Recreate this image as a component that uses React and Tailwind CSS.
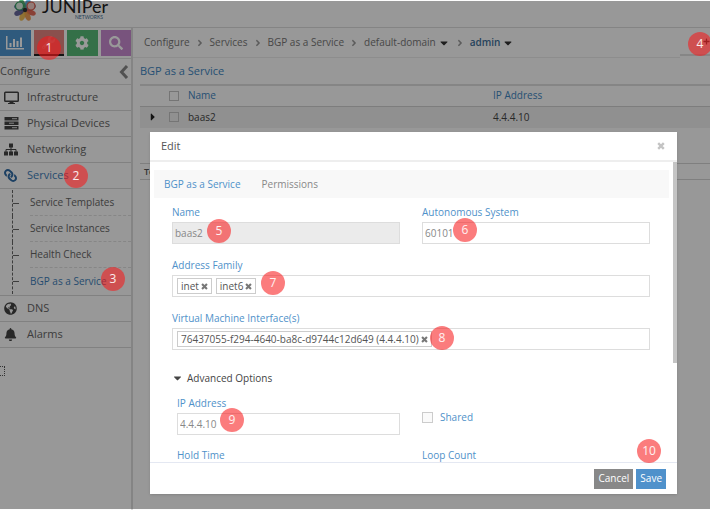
import React, { useState } from "react";
import {
  FaWrench,
  FaCog,
  FaSearch,
  FaLink,
  FaGlobeAmericas,
  FaBell,
  FaCaretDown,
  FaCaretRight,
  FaAngleRight,
  FaPlus,
} from "react-icons/fa";

// Bar chart with axes for the Monitor button
const ChartIcon = () => (
  <svg width="18" height="14" viewBox="0 0 18 14" fill="currentColor" aria-hidden="true">
    <path d="M0 0h1.5v12H18v1.5H0z" />
    <path d="M3.5 7h2v4h-2zM7 3h2v8H7zM10.5 5h2v6h-2zM14 1.500h2V11h-2z" />
  </svg>
);

const MonitorIcon = () => (
  <svg width="15" height="14" viewBox="0 0 15 14" aria-hidden="true">
    <rect x="0.75" y="1.25" width="13.500" height="9" rx="0.800" fill="none" stroke="currentColor" strokeWidth="1.500" />
    <path d="M5.500 10.500h4v1.500H11v1H4v-1h1.500z" fill="currentColor" />
  </svg>
);

const ServerIcon = () => (
  <svg width="15" height="13" viewBox="0 0 15 13" aria-hidden="true">
    {[0, 4.5, 9].map((y) => (
      <g key={y}>
        <rect x="0.5" y={y} width="14" height="3.500" fill="currentColor" />
        <rect x={y === 4.5 ? 5 : 8} y={y + 1.2} width="5" height="1" fill="#ddd" />
      </g>
    ))}
  </svg>
);

const SitemapIcon = () => (
  <svg width="14" height="13" viewBox="0 0 14 13" fill="currentColor" aria-hidden="true">
    <path d="M5 0.500h4v4H5zM0 8.500h4v4H0zM5 8.500h4v4H5zM10 8.500h4v4h-4z" />
    <path d="M7 4v5M2 9V6.500h10V9" fill="none" stroke="currentColor" />
  </svg>
);

const CrossIcon = ({ size, className }) => (
  <svg width={size} height={size} viewBox="0 0 10 10" className={className} aria-hidden="true">
    <path d="M1.500 1.500l7 7M8.500 1.500l-7 7" stroke="currentColor" strokeWidth="3" />
  </svg>
);

const ChevronIcon = () => (
  <svg width="10" height="14" viewBox="0 0 10 14" className="text-[#888]" aria-hidden="true">
    <path d="M8 1L2.500 7L8 13" fill="none" stroke="currentColor" strokeWidth="3" />
  </svg>
);

const petals = [
  "#4a9fd0",
  "#3f74b8",
  "#e0533f",
  "#ef8d3a",
  "#efb43c",
  "#4d4d8c",
  "#2e4e90",
  "#38a05a",
];

const Logo = () => (
  <svg width="118" height="26" viewBox="0 0 118 26" className="block" role="img" aria-label="Juniper Networks">
    {petals.map((color, i) => (
      <ellipse
        key={color}
        cx="25"
        cy="3.500"
        rx="2.700"
        ry="5"
        fill={color}
        transform={`rotate(${i * 45 + 22} 25 10)`}
        opacity="0.85"
      />
    ))}
    <circle cx="19.500" cy="6" r="4" fill="#dff0e4" stroke="#3aa564" strokeWidth="1.200" />
    <circle cx="31" cy="6" r="4" fill="#f4cdc6" stroke="#e05a48" strokeWidth="1.200" />
    <circle cx="25" cy="10" r="2.200" fill="#333" />
    <text x="42" y="13" fontFamily="Lato, sans-serif" fontSize="18" fill="#222">
      JUNIPer
    </text>
    <text x="75" y="19" fontFamily="Lato, sans-serif" fontSize="5" fill="#3c6f96">
      NETWORKS
    </text>
  </svg>
);

const modes = [
  { label: "Monitor", icon: <ChartIcon />, style: "bg-[#4f97d0]" },
  { label: "Configure", icon: <FaWrench size={13} className="text-[#eba8a4]" />, style: "bg-[#e68580] border-b-2 border-[#222]" },
  { label: "Settings", icon: <FaCog size={14} />, style: "bg-[#58bb78]" },
  { label: "Query", icon: <FaSearch size={14} />, style: "bg-[#c98bd0]" },
];

const services = ["Service Templates", "Service Instances", "Health Check", "BGP as a Service"];

const MenuItem = ({ icon, label, active }) => (
  <a
    href="#"
    className={`flex h-[26px] items-center border-b border-[#d8d8d8] pl-1 text-[11px] ${
      active ? "text-[#3f7fba]" : "text-[#666]"
    }`}
  >
    <span className={`flex w-[23px] ${active ? "text-[#2f6ba5]" : "text-[#444]"}`}>{icon}</span>
    {label}
  </a>
);

const Sidebar = () => (
  <aside className="w-[133px] shrink-0 border-r-2 border-[#dcdcdc]">
    <div className="flex h-[30px] gap-[3px] pt-[2px]">
      {modes.map((mode) => (
        <button
          key={mode.label}
          aria-label={mode.label}
          className={`flex h-[26px] flex-1 items-center justify-center text-white ${mode.style}`}
        >
          {mode.icon}
        </button>
      ))}
    </div>
    <div className="flex h-[27px] items-center justify-between border-y border-[#dcdcdc] pr-[2px] text-[11px] text-[#666]">
      Configure
      <ChevronIcon />
    </div>
    <nav>
      <MenuItem icon={<MonitorIcon />} label="Infrastructure" />
      <MenuItem icon={<ServerIcon />} label="Physical Devices" />
      <MenuItem icon={<SitemapIcon />} label="Networking" />
      <MenuItem icon={<FaLink size={13} className="-scale-x-100" />} label="Services" active />
      <ul className="border-b border-[#d8d8d8] py-px text-[10px]">
        {services.map((item, i) => (
          <li key={item} className="ml-3 flex h-[26px] items-center border-l border-dashed border-[#666]">
            <span className="w-[6px] border-t border-dashed border-[#666]"></span>
            <a
              href="#"
              className={`ml-[11px] flex h-[26px] flex-1 items-center whitespace-nowrap ${
                i < 3 ? "border-b border-dashed border-[#e0e0e0] text-[#666]" : "text-[#3f7fba]"
              }`}
            >
              {item}
            </a>
          </li>
        ))}
      </ul>
      <MenuItem icon={<FaGlobeAmericas size={13} />} label="DNS" />
      <MenuItem icon={<FaBell size={13} />} label="Alarms" />
    </nav>
    <div className="mt-[18px] h-[10px] w-[5px] border border-l-0 border-dotted border-[#555]"></div>
  </aside>
);

const Separator = () => <FaAngleRight size={10} className="mx-[5px] text-[#999]" />;

const Breadcrumb = () => (
  <div className="flex h-[30px]">
    <div className="flex flex-1 items-center border-b border-[#ececec] pl-[11px] text-[10px] text-[#777]">
      <a href="#">Configure</a>
      <Separator />
      <a href="#">Services</a>
      <Separator />
      <a href="#">BGP as a Service</a>
      <Separator />
      <button className="flex items-center gap-[2px]">
        default-domain <FaCaretDown size={12} className="text-[#333]" />
      </button>
      <Separator />
      <button className="flex items-center gap-[2px] font-semibold text-[#3f7099]">
        admin <FaCaretDown size={12} className="text-[#333]" />
      </button>
    </div>
    <button aria-label="Add" className="flex h-[28px] w-[30px] items-center justify-end border-b-2 border-[#e0e0e0] text-[#444]">
      <FaPlus size={7} />
    </button>
  </div>
);

const Check = ({ label }) => (
  <input type="checkbox" aria-label={label} className="block size-[10px] appearance-none border border-[#c4c4c4]" />
);

const ServiceTable = () => (
  <main className="pl-[7px]">
    <h1 className="flex h-[26px] items-center text-[11px] text-[#3f86c2]">BGP as a Service</h1>
    <table className="w-full table-fixed border-t-2 border-[#dedede] text-left text-[10px]">
      <colgroup>
        <col className="w-[29px]" />
        <col className="w-[19px]" />
        <col />
        <col className="w-[217px]" />
      </colgroup>
      <thead>
        <tr className="h-[21px] border-b border-[#d0d0d0] text-[#3f86c2]">
          <th></th>
          <th><Check label="Select all" /></th>
          <th className="font-normal">Name</th>
          <th className="font-normal">IP Address</th>
        </tr>
      </thead>
      <tbody>
        <tr className="h-[22px] bg-[#f0f0f0] text-[#444]">
          <td><FaCaretRight size={12} className="ml-[7px] text-[#222]" /></td>
          <td><Check label="Select baas2" /></td>
          <td>baas2</td>
          <td>4.4.4.10</td>
        </tr>
      </tbody>
    </table>
    <div className="mt-[35px] flex h-[17px] items-center border-y border-[#d4d4d4] pl-1 text-[9px] font-semibold text-[#555]">
      Total: 1 records
    </div>
  </main>
);

const inputStyle = "block h-[22px] w-full border border-[#ddd] px-[2px] text-[10px] text-[#888]";

const Field = ({ id, label, value, disabled }) => (
  <div>
    <label htmlFor={id} className="block h-5 leading-5 text-[#4f91c9]">{label}</label>
    <input id={id} defaultValue={value} disabled={disabled} className={`${inputStyle} ${disabled ? "bg-[#ebebeb]" : "bg-white"}`} />
  </div>
);

const TagField = ({ label, values }) => {
  const [tags, setTags] = useState(values);

  return (
    <div role="group" aria-label={label}>
      <div className="h-5 leading-5 text-[#4f91c9]">{label}</div>
      <div className="flex h-[22px] items-center gap-1 border border-[#ddd] px-1">
        {tags.map((tag) => (
          <span key={tag} className="flex h-4 items-center gap-[2px] border border-[#ccc] px-[3px] text-[#555]">
            {tag}
            <button aria-label={`Remove ${tag}`} onClick={() => setTags(tags.filter((t) => t !== tag))}>
              <CrossIcon size={7} className="text-[#777]" />
            </button>
          </span>
        ))}
      </div>
    </div>
  );
};

const EditModal = () => (
  <div role="dialog" aria-label="Edit" className="flex w-full flex-col bg-white text-[10px] shadow">
    <div className="flex h-[30px] shrink-0 items-center justify-between border-b-2 border-[#eee] pr-3 pl-[11px]">
      <h2 className="text-[11px] text-[#555]">Edit</h2>
      <button aria-label="Close">
        <CrossIcon size={8} className="text-[#c4c4c4]" />
      </button>
    </div>

    <div className="relative min-h-0 flex-1 overflow-hidden pt-2 pr-2 pl-1">
      <div className="absolute top-0 right-0 h-[201px] w-[4px] bg-[#c4c4c4]"></div>
      <div className="flex h-7 items-center gap-[21px] bg-[#f8f8f8] pl-[10px]">
        <button className="text-[#4f91c9]">BGP as a Service</button>
        <button className="text-[#888]">Permissions</button>
      </div>
      <div className="pt-1 pr-[19px] pl-[18px]">
        <div className="grid grid-cols-2 gap-x-[22px]">
          <Field id="name" label="Name" value="baas2" disabled />
          <Field id="asn" label="Autonomous System" value="60101" />
        </div>
        <div className="mt-[11px]">
          <TagField label="Address Family" values={["inet", "inet6"]} />
        </div>
        <div className="mt-[11px]">
          <TagField label="Virtual Machine Interface(s)" values={["76437055-f294-4640-ba8c-d9744c12d649 (4.4.4.10)"]} />
        </div>
        <button className="mt-[18px] flex h-5 items-center gap-1 text-[#444]">
          <FaCaretDown size={12} className="w-[11px]" />
          Advanced Options
        </button>
        <div className="mt-[5px] grid grid-cols-2 gap-x-[22px] gap-y-[10px]">
          <div className="pl-[5px]">
            <Field id="ip" label="IP Address" value="4.4.4.10" />
          </div>
          <label className="flex items-center gap-[7px] pt-[6px] text-[#4f91c9]">
            <input type="checkbox" className="size-[11px] appearance-none border border-[#ccc] bg-[#fafafa]" />
            Shared
          </label>
          <div className="pl-[5px]">
            <Field id="hold" label="Hold Time" value="" />
          </div>
          <Field id="loop" label="Loop Count" value="" />
        </div>
      </div>
    </div>

    <div className="flex h-8 shrink-0 items-center justify-end gap-[3px] border-t border-[#e4e8f2] pr-[11px]">
      <button className="h-5 bg-[#888] px-1 text-white">Cancel</button>
      <button className="h-5 bg-[#4f91cb] px-1 text-white">Save</button>
    </div>
  </div>
);

// Numbered callouts pinned over the screen, by centre point
const steps = [
  [49, 48],
  [76, 176],
  [113, 279],
  [700, 44],
  [219, 231],
  [465, 230],
  [273, 283],
  [442, 338],
  [232, 420],
  [649, 451],
];

const Steps = () =>
  steps.map(([x, y], i) => (
    <span
      key={i}
      className="pointer-events-none absolute flex size-6 -translate-1/2 items-center justify-center rounded-full bg-[#f8181a]/57 text-xs text-white/90"
      style={{ left: x, top: y }}
    >
      {i + 1}
    </span>
  ));

export default function App() {
  return (
    <div className="relative h-screen overflow-hidden bg-[#fdfdfd] font-['Open_Sans',sans-serif]">
      <header className="h-7 border-b border-[#dcdcdc]">
        <Logo />
      </header>
      <div className="flex min-h-[calc(100vh-28px)]">
        <Sidebar />
        <div className="min-w-0 flex-1">
          <Breadcrumb />
          <ServiceTable />
        </div>
      </div>

      <div className="absolute inset-0 my-px flex bg-black/40 pt-[131px] pr-[33px] pb-[15px] pl-[150px]">
        <EditModal />
      </div>
      <Steps />
    </div>
  );
}
